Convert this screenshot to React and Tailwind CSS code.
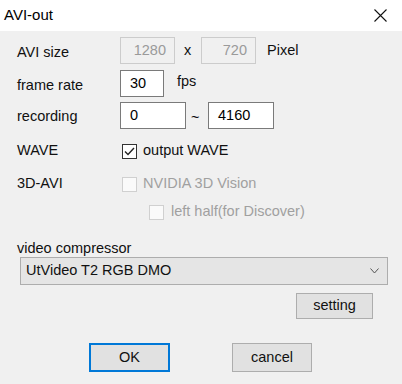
import React from "react";

const font = { fontFamily: '"Liberation Sans", Arial, sans-serif' };

function Field({ value, disabled, width }) {
  return (
    <div
      className={`h-[27px] flex items-center text-[14.5px] border shrink-0 ${
        disabled
          ? "border-[#cccccc] bg-[#f0f0f0] text-[#9a9a9a] justify-end pr-[8px]"
          : "border-[#7a7a7a] bg-white text-black pl-[9px]"
      }`}
      style={{ width }}
    >
      {value}
    </div>
  );
}

function Check({ checked, disabled }) {
  return (
    <div
      className={`w-[15px] h-[15px] border flex items-center justify-center shrink-0 ${
        disabled ? "border-[#d0d0d0] bg-[#fafafa]" : "border-[#333333] bg-white"
      }`}
    >
      {checked && (
        <svg width="11" height="9" viewBox="0 0 11 9" fill="none">
          <path d="M1 4.5 L4 7.5 L10 1" stroke="#222" strokeWidth="1.4" />
        </svg>
      )}
    </div>
  );
}

export default function App() {
  return (
    <div className="w-[402px] h-[384px] bg-[#f0f0f0] flex flex-col overflow-hidden text-[#111] text-[14.5px]" style={font}>
      {/* title bar */}
      <div className="h-[31px] bg-white flex items-center justify-between pl-[4px] pr-[15px] shrink-0">
        <span className="text-[15px] text-black">AVI-out</span>
        <svg width="13" height="13" viewBox="0 0 13 13">
          <path d="M0.5 0.5 L12.5 12.5 M12.5 0.5 L0.5 12.5" stroke="#111" strokeWidth="1.1" />
        </svg>
      </div>

      {/* size */}
      <div className="flex items-center h-[27px] mt-[6px]">
        <span className="w-[120px] shrink-0 pl-[17px] pt-[4px]">AVI size</span>
        <Field value="1280" disabled width={55} />
        <span className="ml-[9px] w-[17px]">x</span>
        <Field value="720" disabled width={55} />
        <span className="ml-[11px]">Pixel</span>
      </div>

      {/* frame rate */}
      <div className="flex items-center h-[27px] mt-[6px]">
        <span className="w-[120px] shrink-0 pl-[17px] pt-[5px]">frame rate</span>
        <Field value="30" width={44} />
        <span className="ml-[13px] pb-[3px]">fps</span>
      </div>

      {/* recording */}
      <div className="flex items-center h-[27px] mt-[5px]">
        <span className="w-[120px] shrink-0 pl-[17px] pt-[2px]">recording</span>
        <Field value="0" width={66} />
        <span className="ml-[5px] w-[17px] pt-[4px]">~</span>
        <Field value="4160" width={66} />
      </div>

      {/* WAVE */}
      <div className="flex items-center h-[16px] mt-[14px]">
        <span className="w-[122px] shrink-0 pl-[17px]">WAVE</span>
        <Check checked />
        <span className="ml-[6px]">output WAVE</span>
      </div>

      {/* 3D-AVI */}
      <div className="flex items-center h-[16px] mt-[17px]">
        <span className="w-[122px] shrink-0 pl-[17px]">3D-AVI</span>
        <Check disabled />
        <span className="ml-[6px] text-[#a0a0a0]">NVIDIA 3D Vision</span>
      </div>

      <div className="flex items-center h-[16px] mt-[12px] ml-[149px]">
        <Check disabled />
        <span className="ml-[7px] text-[#a0a0a0]">left half(for Discover)</span>
      </div>

      {/* compressor */}
      <div className="mt-[20px] ml-[17px] h-[16px] leading-[16px]">video compressor</div>
      <div className="mt-[1px] ml-[20px] w-[368px] h-[28px] border border-[#adadad] bg-[#e5e5e5] flex items-center justify-between pl-[5px] pr-[8px]">
        <span>UtVideo T2 RGB DMO</span>
        <svg width="9" height="6" viewBox="0 0 9 6" fill="none">
          <path d="M0.5 0.5 L4.5 5 L8.5 0.5" stroke="#555" strokeWidth="1" />
        </svg>
      </div>

      <div className="mt-[8px] ml-[296px] w-[77px] h-[26px] border border-[#adadad] bg-[#e1e1e1] flex items-center justify-center">
        setting
      </div>

      {/* buttons */}
      <div className="flex mt-[24px] h-[29px]">
        <div className="ml-[89px] w-[81px] h-[29px] border-2 border-[#0078d7] bg-[#e1e1e1] flex items-center justify-center">
          OK
        </div>
        <div className="ml-[62px] w-[80px] h-[29px] border border-[#adadad] bg-[#e1e1e1] flex items-center justify-center">
          cancel
        </div>
      </div>
    </div>
  );
}
